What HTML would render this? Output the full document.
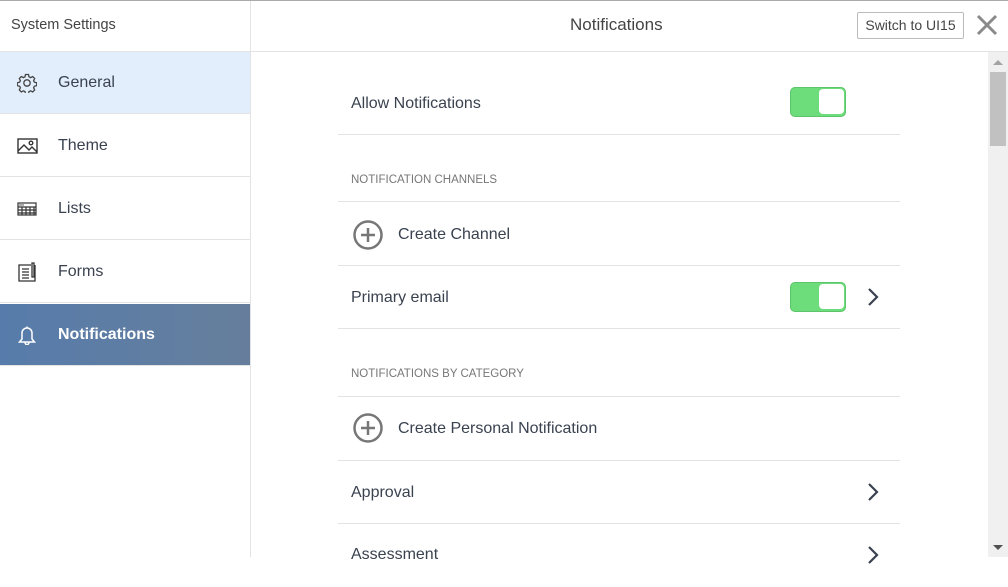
<!DOCTYPE html>
<html><head><style>
*{box-sizing:border-box;margin:0;padding:0}
body{width:1008px;height:557px;overflow:hidden;background:#fff;font-family:"Liberation Sans",sans-serif;color:#333;position:relative}
.abs{position:absolute}
.top{left:0;top:0;width:1008px;height:1px;background:#aaa}
.hdr{left:0;top:1px;width:1008px;height:51px;border-bottom:1px solid #e3e3e3}
.side{left:0;top:52px;width:251px;height:505px;border-right:1px solid #e3e3e3}
.item{position:absolute;left:0;width:250px;height:62px;border-bottom:1px solid #e3e3e3;font-size:16px;color:#3a4250;display:flex;align-items:center}
.item svg{position:absolute;left:17px}
.item span{position:absolute;left:58px;top:22px}
.row{position:absolute;left:338px;width:562px;border-bottom:1px solid #e3e3e3;font-size:16px;color:#3a4250}
.row .t{position:absolute;left:13px}
.sec{position:absolute;left:351px;font-size:11.5px;color:#777}
.tog{position:absolute;left:790px;width:56px;height:30px;border:1.5px solid #5cc46b;border-radius:5px;background:#6ddc7a}
.tog:after{content:"";position:absolute;right:1px;top:1px;width:25px;height:25px;background:#fff;border-radius:4px}
.chev{position:absolute;left:866px}
</style></head><body>
<div class="abs top"></div>
<div class="abs hdr"></div>
<div class="abs" style="left:11px;top:17px;font-size:14.5px;color:#444">System Settings</div>
<div class="abs" style="left:250px;top:1px;width:1px;height:51px;background:#e3e3e3"></div>
<div class="abs" style="left:570px;top:15px;font-size:17px;color:#444">Notifications</div>
<div class="abs" style="left:857px;top:12px;width:107px;height:27px;border:1px solid #bbb;border-radius:2px;font-size:14px;color:#444;text-align:center;line-height:25px">Switch to UI15</div>
<svg class="abs" style="left:976px;top:14px" width="22" height="22"><path d="M2 2L20 20M20 2L2 20" stroke="#8a8a8a" stroke-width="3"/></svg>
<div class="abs side">
<div class="item" style="top:0;background:#e3eefc"><svg width="20" height="20" viewBox="0 0 20 20" fill="none" stroke="#444" stroke-width="1.3"><path d="M8.5 1.5h3l.5 2.3 1.6.8 2.1-1.1 2 2-1.1 2.1.8 1.6 2.3.5v3l-2.3.5-.8 1.6 1.1 2.1-2 2-2.1-1.1-1.6.8-.5 2.3h-3l-.5-2.3-1.6-.8-2.1 1.1-2-2 1.1-2.1-.8-1.6-2.3-.5v-3l2.3-.5.8-1.6-1.1-2.1 2-2 2.1 1.1 1.6-.8z"/><circle cx="10" cy="10" r="3.2"/></svg><span>General</span></div>
<div class="item" style="top:63px"><svg width="21" height="16" viewBox="0 0 21 16" fill="none" stroke="#333" stroke-width="1.4"><rect x="1" y="1" width="19" height="14"/><path d="M1 13l6-6 5 5 3-3 5 5"/><circle cx="14" cy="5" r="1.8"/></svg><span>Theme</span></div>
<div class="item" style="top:126px"><svg width="20" height="14" viewBox="0 0 20 14" fill="none" stroke="#333" stroke-width="1.2"><rect x="1" y="1" width="18" height="12"/><path d="M1 5h18M1 8h18M1 11h18M5 5v8M9 5v8M13 5v8M17 5v8"/><path d="M2 3h5" stroke-width="0.8"/></svg><span>Lists</span></div>
<div class="item" style="top:189px"><svg width="20" height="20" viewBox="0 0 20 20" fill="none" stroke="#333" stroke-width="1.3"><path d="M14 3H2v16h16V3"/><path d="M5 7h7M5 10h7M5 13h7M5 16h7"/><path d="M15 1h2v14h-2z"/></svg><span>Forms</span></div>
<div class="item" style="top:252px;background:linear-gradient(90deg,#577cab,#667e9c);color:#fff;font-weight:bold"><svg width="20" height="20" viewBox="0 0 20 20" fill="none" stroke="#fff" stroke-width="1.5"><path d="M10 1.5v1.5M5 14V8a5 5 0 0 1 10 0v6l2.5 3h-15zM8 17.5a2 2 0 0 0 4 0"/></svg><span>Notifications</span></div>
</div>
<div class="row" style="top:72px;height:63px"><span class="t" style="top:23px">Allow Notifications</span></div>
<div class="tog" style="top:87px"></div>
<div class="sec" style="top:174px">NOTIFICATION CHANNELS</div>
<div class="row" style="top:201px;height:1px"></div>
<div class="row" style="top:202px;height:64px"><svg class="abs" style="left:14px;top:17px" width="32" height="32"><circle cx="16" cy="16" r="13.5" fill="none" stroke="#777" stroke-width="2.5"/><path d="M16 9v14M9 16h14" stroke="#777" stroke-width="2.5"/></svg><span class="t" style="left:60px;top:24px">Create Channel</span></div>
<div class="row" style="top:266px;height:63px"><span class="t" style="top:23px">Primary email</span></div>
<div class="tog" style="top:282px"></div>
<svg class="chev" style="top:287px" width="14" height="20"><path d="M3 2l8 8-8 8" fill="none" stroke="#3a4250" stroke-width="2.2"/></svg>
<div class="sec" style="top:368px">NOTIFICATIONS BY CATEGORY</div>
<div class="row" style="top:396px;height:1px"></div>
<div class="row" style="top:397px;height:64px"><svg class="abs" style="left:14px;top:15px" width="32" height="32"><circle cx="16" cy="16" r="13.5" fill="none" stroke="#777" stroke-width="2.5"/><path d="M16 9v14M9 16h14" stroke="#777" stroke-width="2.5"/></svg><span class="t" style="left:60px;top:23px">Create Personal Notification</span></div>
<div class="row" style="top:461px;height:63px"><span class="t" style="top:23px">Approval</span></div>
<svg class="chev" style="top:482px" width="14" height="20"><path d="M3 2l8 8-8 8" fill="none" stroke="#3a4250" stroke-width="2.2"/></svg>
<div class="row" style="top:524px;height:63px;border:none"><span class="t" style="top:22px">Assessment</span></div>
<svg class="chev" style="top:545px" width="14" height="20"><path d="M3 2l8 8-8 8" fill="none" stroke="#3a4250" stroke-width="2.2"/></svg>
<div class="abs" style="left:988px;top:52px;width:20px;height:505px;background:#f0f0f0"></div>
<div class="abs" style="left:990px;top:72px;width:16px;height:74px;background:#c1c1c1"></div>
<svg class="abs" style="left:993px;top:60px" width="10" height="6"><path d="M0 5l5-5 5 5z" fill="#a3a3a3"/></svg>
<svg class="abs" style="left:993px;top:545px" width="10" height="6"><path d="M0 0l5 5 5-5z" fill="#505050"/></svg>
</body></html>
